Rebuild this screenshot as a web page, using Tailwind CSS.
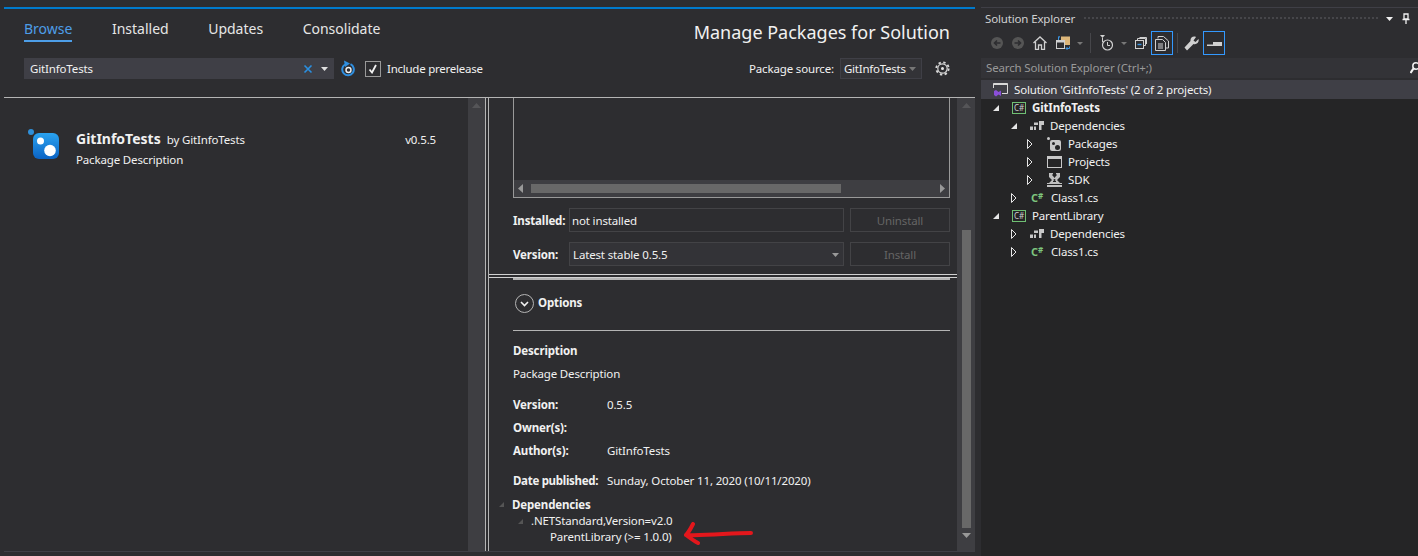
<!DOCTYPE html>
<html lang="en">
<head>
  <meta charset="UTF-8" />
  <title>Manage Packages for Solution</title>
  <script src="https://cdn.jsdelivr.net/npm/@tailwindcss/browser@4"></script>
</head>
<body class="bg-[#2d2d30] font-['Noto_Sans',sans-serif] text-[11.5px] tracking-[-0.15px] text-[#f1f1f1]">
  <div class="flex w-[1418px] h-[556px] overflow-hidden">

    <!-- NuGet pane -->
    <div class="w-[975px] h-full pl-[4px] flex flex-col">
      <div class="h-[7px] shrink-0"></div>
      <div class="h-[2px] shrink-0 bg-[#007acc]"></div>

      <!-- Header -->
      <div class="h-[88px] shrink-0 pl-[20px] pr-[25px] flex flex-col">
        <div class="flex justify-between h-[40px] items-start pt-[10px] tracking-normal">
          <div class="flex gap-[39.5px] text-[14px] text-[#e6e6e6]">
            <div class="text-[#4d9ee8] border-b-2 border-[#4d9ee8] h-[23px] leading-[20px]">Browse</div>
            <div class="leading-[20px]">Installed</div>
            <div class="leading-[20px]">Updates</div>
            <div class="leading-[20px]">Consolidate</div>
          </div>
          <div class="text-[18px] leading-[24px] mt-[1px] text-[#f1f1f1]">Manage Packages for Solution</div>
        </div>
        <div class="flex items-center justify-between mt-[9px]">
          <div class="flex items-center">
            <div class="w-[310px] h-[21px] bg-[#3f3f46] flex items-center pl-[6px] pr-[6px]">
              <span class="flex-1">GitInfoTests</span>
              <svg width="10" height="10" viewBox="0 0 10 10" class="mr-[8px]"><path d="M1.5 1.5L8.5 8.5M8.5 1.500L1.5 8.5" stroke="#2a8fe0" stroke-width="1.6"/></svg>
              <svg width="7" height="4" viewBox="0 0 7 4"><path d="M0 0H7L3.5 4Z" fill="#e0e0e0"/></svg>
            </div>
            <svg width="15" height="17" viewBox="0 0 15 17" class="ml-[7px]"><path d="M9.5 4.2A5.8 5.800 0 1 1 4 4.500" fill="none" stroke="#2f8fe0" stroke-width="2"/><path d="M3 0.500L9 3.500L4 7Z" fill="#2f8fe0"/><circle cx="7.500" cy="10" r="2.500" fill="none" stroke="#f1f1f1" stroke-width="1.400"/></svg>
            <div class="ml-[9px] w-[16px] h-[16px] border border-[#999] flex items-center justify-center">
              <svg width="10" height="10" viewBox="0 0 10 10"><path d="M1.5 5.5L4 8.5L8 1" fill="none" stroke="#f1f1f1" stroke-width="1.800"/></svg>
            </div>
            <span class="ml-[6px] pt-[1px] tracking-[-0.25px]">Include prerelease</span>
          </div>
          <div class="flex items-center">
            <span>Package source:</span>
            <div class="ml-[6px] w-[82px] h-[21px] bg-[#333337] border border-[#3f3f46] flex items-center pl-[3px] pr-[5px] justify-between">
              <span class="tracking-[-0.25px]">GitInfoTests</span>
              <svg width="7" height="4" viewBox="0 0 7 4"><path d="M0 0H7L3.5 4Z" fill="#777"/></svg>
            </div>
            <svg width="15" height="15" viewBox="0 0 15 15" class="ml-[13px]"><circle cx="7.500" cy="7.500" r="1.500" fill="#e6e6e6"/><circle cx="7.500" cy="7.500" r="4.700" fill="none" stroke="#d8d8d8" stroke-width="1.200"/><circle cx="7.500" cy="7.500" r="6.200" fill="none" stroke="#d8d8d8" stroke-width="1.800" stroke-dasharray="2.400 2.470"/></svg>
          </div>
        </div>
      </div>
      <div class="h-px shrink-0 bg-[#b4b4b4]"></div>

      <!-- Content -->
      <div class="flex flex-1 min-h-0">
        <!-- Package list -->
        <div class="w-[464px] shrink-0 pl-[24px] pt-[30px] flex items-start">
          <svg width="32" height="32" viewBox="0 0 32 32" class="shrink-0 mt-[1px]">
            <defs><linearGradient id="pkg" x1="0" y1="0" x2="0" y2="1"><stop offset="0" stop-color="#2aa3f0"/><stop offset="1" stop-color="#0b63c4"/></linearGradient></defs>
            <circle cx="3" cy="3" r="3" fill="#2f8fd8"/>
            <rect x="5" y="4" width="26" height="26" rx="6" fill="url(#pkg)"/>
            <circle cx="12.500" cy="12" r="3.500" fill="#fff"/>
            <circle cx="22" cy="21.500" r="5.800" fill="#fff"/>
          </svg>
          <div class="ml-[16px] flex-1">
            <div class="flex items-baseline h-[20px]">
              <span class="text-[14px] font-bold tracking-normal">GitInfoTests</span>
              <span class="ml-[6px]">by GitInfoTests</span>
              <span class="ml-auto mr-[32px]">v0.5.5</span>
            </div>
            <div class="mt-[3px]">Package Description</div>
          </div>
        </div>

        <!-- List scrollbar -->
        <div class="w-[17px] shrink-0 bg-[#3e3e42] flex justify-center pt-[5px] pb-[5px]">
          <svg width="9" height="5" viewBox="0 0 9 5"><path d="M0 5H9L4.5 0Z" fill="#555558"/></svg>
        </div>
        <div class="w-px shrink-0 bg-[#b4b4b4]"></div>
        <div class="w-[2px] shrink-0"></div>
        <div class="w-px shrink-0 bg-[#b4b4b4]"></div>

        <!-- Details -->
        <div class="w-[468px] shrink-0 flex flex-col pb-[5px]">
          <div class="pl-[24px] pr-[7px]">
            <div class="h-[100px] border-x border-b border-[#999] flex flex-col justify-end">
              <div class="h-[17px] bg-[#3e3e42] flex items-center px-[4px]">
                <svg width="5" height="9" viewBox="0 0 5 9" class="mr-[8px]"><path d="M5 0V9L0 4.5Z" fill="#999"/></svg>
                <div class="w-[310px] h-[9px] bg-[#686868]"></div>
                <svg width="5" height="9" viewBox="0 0 5 9" class="ml-auto"><path d="M0 0V9L5 4.5Z" fill="#999"/></svg>
              </div>
            </div>
            <div class="flex items-center mt-[10px] h-[24px]">
              <span class="w-[56px] pt-[1px] font-bold">Installed:</span>
              <div class="w-[275px] h-[24px] pt-[1px] border border-[#434346] flex items-center px-[2px]">not installed</div>
              <div class="ml-[6px] flex-1 h-[24px] pt-[1px] border border-[#434346] flex items-center justify-center text-[#656565]">Uninstall</div>
            </div>
            <div class="flex items-center mt-[10px] h-[24px]">
              <span class="w-[56px] pt-[1px] font-bold">Version:</span>
              <div class="w-[275px] h-[24px] pt-[1px] bg-[#333337] border border-[#434346] flex items-center justify-between pl-[3px] pr-[4px]">
                <span>Latest stable 0.5.5</span>
                <svg width="7" height="4" viewBox="0 0 7 4"><path d="M0 0H7L3.5 4Z" fill="#999"/></svg>
              </div>
              <div class="ml-[6px] flex-1 h-[24px] pt-[1px] border border-[#434346] flex items-center justify-center text-[#656565]">Install</div>
            </div>
          </div>
          <div class="h-px bg-[#d0d0d0] mt-[8px]"></div>
          <div class="h-px bg-[#d0d0d0] mt-[2px]"></div>
          <div class="ml-[24px] mr-[7px] h-[2px] bg-[#b4b4b4]"></div>
          <div class="pl-[24px] pr-[7px]">
            <div class="flex items-center h-[20px] mt-[13px] pl-[2px]">
              <svg width="19" height="19" viewBox="0 0 19 19"><circle cx="9.5" cy="9.5" r="9" fill="none" stroke="#b4b4b4"/><path d="M6 8L9.5 11.5L13 8" fill="none" stroke="#f1f1f1" stroke-width="1.6"/></svg>
              <span class="ml-[4px] font-bold">Options</span>
            </div>
            <div class="h-px bg-[#b4b4b4] mt-[17px]"></div>
            <div class="font-bold mt-[11px] h-[17px] leading-[17px]">Description</div>
            <div class="mt-[6px] h-[17px] leading-[17px]">Package Description</div>
            <div class="flex mt-[14px] h-[17px] leading-[17px]"><span class="w-[94px] font-bold">Version:</span><span>0.5.5</span></div>
            <div class="flex mt-[6px] h-[17px] leading-[17px]"><span class="w-[94px] font-bold">Owner(s):</span></div>
            <div class="flex mt-[6px] h-[17px] leading-[17px]"><span class="w-[94px] font-bold">Author(s):</span><span>GitInfoTests</span></div>
            <div class="flex mt-[13px] h-[17px] leading-[17px]"><span class="w-[94px] font-bold tracking-[-0.3px]">Date published:</span><span>Sunday, October 11, 2020 (10/11/2020)</span></div>
          </div>
          <div class="pl-[10px] mt-[7px] h-[17px] leading-[17px] flex items-center">
            <svg width="5" height="5" viewBox="0 0 5 5"><path d="M5 0V5H0Z" fill="#555"/></svg>
            <span class="ml-[8px] font-bold">Dependencies</span>
          </div>
          <div class="pl-[29px] h-[16px] leading-[16px] flex items-center">
            <svg width="5" height="5" viewBox="0 0 5 5"><path d="M5 0V5H0Z" fill="#555"/></svg>
            <span class="ml-[8px]">.NETStandard,Version=v2.0</span>
          </div>
          <div class="pl-[61px] h-[16px] leading-[16px] relative">
            ParentLibrary (&gt;= 1.0.0)
            <!-- red annotation arrow -->
            <svg width="72" height="26" viewBox="0 0 72 26" class="absolute left-[193px] -top-[7px]"><path d="M69 11C48 11 24 14 4 13M11 2C9 6 7 10 4 13C8 16 12 19 16 21" fill="none" stroke="#e3171c" stroke-width="4" stroke-linecap="round" stroke-linejoin="round"/></svg>
          </div>
        </div>

        <!-- Details scrollbar -->
        <div class="w-[18px] shrink-0 bg-[#3e3e42] pb-[5px] flex flex-col items-center relative">
          <svg width="9" height="5" viewBox="0 0 9 5" class="mt-[5px]"><path d="M0 5H9L4.5 0Z" fill="#555558"/></svg>
          <div class="w-[9px] h-[298px] bg-[#686868] mt-[122px]"></div>
          <svg width="9" height="5" viewBox="0 0 9 5" class="mt-[5px]"><path d="M0 0H9L4.5 5Z" fill="#999"/></svg>
        </div>
      </div>
      <div class="h-[5px] shrink-0 border-t border-[#3f3f46]"></div>
    </div>

    <!-- Splitter -->
    <div class="w-[6px] shrink-0"></div>

    <!-- Solution Explorer -->
    <div class="flex-1 pt-[7px] flex flex-col">
      <div class="h-px bg-[#3f3f46]"></div>
      <div class="h-[21px] flex items-center pl-[4px] pr-[8px] text-[#d0d0d0]">
        <span>Solution Explorer</span>
        <div class="flex-1 mx-[8px] h-[5px] bg-[radial-gradient(#46464a_1px,transparent_1px)] bg-[length:4px_4px]"></div>
        <svg width="7" height="4" viewBox="0 0 7 4" class="mr-[9px]"><path d="M0 0H7L3.5 4Z" fill="#f1f1f1"/></svg>
        <svg width="8" height="11" viewBox="0 0 8 11"><path d="M2 1H6V6H2ZM0.5 6.5H7.5M4 7V11" fill="none" stroke="#f1f1f1" stroke-width="1.3"/></svg>
      </div>
      <!-- Toolbar -->
      <div class="h-[28px] flex items-center pl-[10px]">
        <svg width="12" height="12" viewBox="0 0 12 12"><circle cx="6" cy="6" r="6" fill="#555"/><path d="M9.500 6H3.500M6 3.500L3.500 6L6 8.500" fill="none" stroke="#2d2d30" stroke-width="1.600"/></svg>
        <svg width="12" height="12" viewBox="0 0 12 12" class="ml-[9px]"><circle cx="6" cy="6" r="6" fill="#555"/><path d="M2.500 6H8.500M6 3.500L8.500 6L6 8.500" fill="none" stroke="#2d2d30" stroke-width="1.600"/></svg>
        <svg width="14" height="14" viewBox="0 0 14 14" class="ml-[9px]"><path d="M0.500 7L7 1L13.500 7M2.500 6V13.500H5.500V9H8.500V13.500H11.500V6" fill="none" stroke="#d0d0d0" stroke-width="1.300"/></svg>
        <svg width="14" height="14" viewBox="0 0 14 14" class="ml-[9px]"><rect x="0.500" y="4.500" width="8" height="8" fill="#2d2d30" stroke="#d0d0d0"/><path d="M0.500 4.500H8.500V6.500H0.500Z" fill="#d0d0d0"/><path d="M5 0.500H14V9H9V4H5Z" fill="#dcb67a"/><path d="M2.500 4V1H4M3.500 0L2.500 1M10 12.500H13.500V10.500M10 12.500L11.500 11M10 12.500L11.500 14" fill="none" stroke="#3b94e0"/></svg>
        <svg width="6" height="3" viewBox="0 0 6 3" class="ml-[7px]"><path d="M0 0H6L3 3Z" fill="#777"/></svg>
        <div class="w-px h-[20px] bg-[#46464a] ml-[7px]"></div>
        <svg width="13" height="16" viewBox="0 0 13 16" class="ml-[9px]"><circle cx="7.500" cy="10" r="5" fill="none" stroke="#d0d0d0" stroke-width="1.200"/><path d="M7.500 7V10.500H10" fill="none" stroke="#d0d0d0"/><path d="M0 0H5L2.500 3Z" fill="#d0d0d0"/><path d="M2.500 3V7" stroke="#d0d0d0"/></svg>
        <svg width="6" height="3" viewBox="0 0 6 3" class="ml-[8px]"><path d="M0 0H6L3 3Z" fill="#777"/></svg>
        <svg width="12" height="12" viewBox="0 0 12 12" class="ml-[8px]"><rect x="0.500" y="3.500" width="8" height="8" fill="none" stroke="#d0d0d0"/><path d="M2.500 3V1.500H10.500V8.500H9M4.500 0.500H11.500V7" fill="none" stroke="#d0d0d0"/><path d="M2.500 7.500H6.500" stroke="#3b94e0" stroke-width="1.400"/></svg>
        <div class="ml-[4px] w-[22px] h-[24px] border border-[#3399ff] flex items-center justify-center">
          <svg width="14" height="15" viewBox="0 0 14 15"><path d="M3 2.500V0.500H8.500L13.500 5V12H11M0.500 3.500H7.500L10.500 6.500V14.500H0.500Z" fill="none" stroke="#d0d0d0"/><path d="M3 8H8M3 10H8M3 12H8" stroke="#d0d0d0"/></svg>
        </div>
        <div class="w-px h-[20px] bg-[#46464a] ml-[4px]"></div>
        <svg width="15" height="15" viewBox="0 0 15 15" class="ml-[6px]"><path d="M14.500 3L11.500 6L9.500 4.500L12 1C9 -0.500 6 2 6.500 5L0.500 11.500L3 14.500L9.500 8C12.500 9 15.500 6.500 14.500 3Z" fill="#d0d0d0"/></svg>
        <div class="ml-[4px] w-[22px] h-[24px] border border-[#3399ff] flex items-center justify-center">
          <svg width="15" height="5" viewBox="0 0 15 5"><path d="M0 3.500H6V1H15V5H0Z" fill="#d0d0d0"/></svg>
        </div>
      </div>
      <!-- Search -->
      <div class="h-[20px] mt-[1px] bg-[#333337] flex items-center pl-[5px] text-[#999]">
        <span class="flex-1">Search Solution Explorer (Ctrl+;)</span>
        <svg width="8" height="12" viewBox="0 0 8 12"><circle cx="6" cy="4" r="3.200" fill="none" stroke="#f1f1f1" stroke-width="1.500"/><path d="M3.500 6.500L0.500 11" stroke="#f1f1f1" stroke-width="2.200"/></svg>
      </div>
      <!-- Tree -->
      <div class="flex-1 mt-[2px] bg-[#252526] text-[#f1f1f1]">
        <div class="h-[19px] bg-[#3f3f46] flex items-center pl-[12px]">
          <svg width="15" height="15" viewBox="0 0 15 15"><path d="M0.500 6V1.500H14.500V11.500H9" fill="none" stroke="#d8d8d8"/><path d="M0.500 1.500H14.500V3H0.500Z" fill="#d8d8d8"/><path d="M1 9L3 8L5.500 10L8 8.500V14L5.500 12.500L3 14.500L1 13Z" fill="#8a4fd8"/></svg>
          <span class="ml-[6px]">Solution 'GitInfoTests' (2 of 2 projects)</span>
        </div>
        <div class="h-[18px] flex items-center pl-[12px]">
          <svg width="6" height="6" viewBox="0 0 6 6"><path d="M6 0V6H0Z" fill="#e6e6e6"/></svg>
          <div class="ml-[13px] w-[14px] h-[12px] border border-[#6fbf73] text-[8px] leading-[10px] text-center text-[#d0d0d0] tracking-normal">C#</div>
          <span class="ml-[6px] font-bold">GitInfoTests</span>
        </div>
        <div class="h-[18px] flex items-center pl-[30px]">
          <svg width="6" height="6" viewBox="0 0 6 6"><path d="M6 0V6H0Z" fill="#e6e6e6"/></svg>
          <svg width="14" height="10" viewBox="0 0 14 10" class="ml-[13px]"><path d="M0 5.500H3V9H0ZM4 5.500H6V9H4ZM4 1.500H8V4H4ZM9 0H14V4H11.500V9H9Z" fill="#c8c8c8"/></svg>
          <span class="ml-[6px]">Dependencies</span>
        </div>
        <div class="h-[18px] flex items-center pl-[46px]">
          <svg width="6" height="10" viewBox="0 0 6 10"><path d="M0.5 0.5L5 5L0.5 9.5Z" fill="none" stroke="#e6e6e6"/></svg>
          <svg width="15" height="14" viewBox="0 0 15 14" class="ml-[14px]"><circle cx="1.500" cy="1.500" r="1.500" fill="#c8c8c8"/><rect x="3" y="3" width="11" height="11" rx="2" fill="#c8c8c8"/><circle cx="6.500" cy="6.500" r="1.500" fill="#252526"/><circle cx="10.500" cy="10.500" r="2.500" fill="#252526"/></svg>
          <span class="ml-[6px]">Packages</span>
        </div>
        <div class="h-[18px] flex items-center pl-[46px]">
          <svg width="6" height="10" viewBox="0 0 6 10"><path d="M0.5 0.5L5 5L0.5 9.5Z" fill="none" stroke="#e6e6e6"/></svg>
          <svg width="15" height="12" viewBox="0 0 15 12" class="ml-[14px]"><rect x="0.5" y="0.5" width="14" height="11" fill="none" stroke="#c8c8c8"/><rect x="0" y="0" width="15" height="3" fill="#c8c8c8"/></svg>
          <span class="ml-[6px]">Projects</span>
        </div>
        <div class="h-[18px] flex items-center pl-[46px]">
          <svg width="6" height="10" viewBox="0 0 6 10"><path d="M0.5 0.5L5 5L0.5 9.5Z" fill="none" stroke="#e6e6e6"/></svg>
          <svg width="15" height="14" viewBox="0 0 15 14" class="ml-[14px]"><path d="M2 0H6V3L7.500 5L9 3V0H13V4L10 7L13 10H15V14H0V10H2L5 7L2 4Z" fill="#c0c0c0"/><path d="M0 11.500H15M5 2H10M6 8.500H9" stroke="#252526"/><circle cx="7.500" cy="7" r="1" fill="#252526"/></svg>
          <span class="ml-[6px]">SDK</span>
        </div>
        <div class="h-[18px] flex items-center pl-[30px]">
          <svg width="6" height="10" viewBox="0 0 6 10"><path d="M0.5 0.5L5 5L0.5 9.5Z" fill="none" stroke="#e6e6e6"/></svg>
          <span class="ml-[14px] w-[14px] font-bold text-[#7fc77f] leading-none tracking-normal"><span class="text-[11px]">C</span><span class="text-[8px] align-top">#</span></span>
          <span class="ml-[6px]">Class1.cs</span>
        </div>
        <div class="h-[18px] flex items-center pl-[12px]">
          <svg width="6" height="6" viewBox="0 0 6 6"><path d="M6 0V6H0Z" fill="#e6e6e6"/></svg>
          <div class="ml-[13px] w-[14px] h-[12px] border border-[#6fbf73] text-[8px] leading-[10px] text-center text-[#d0d0d0] tracking-normal">C#</div>
          <span class="ml-[6px]">ParentLibrary</span>
        </div>
        <div class="h-[18px] flex items-center pl-[30px]">
          <svg width="6" height="10" viewBox="0 0 6 10"><path d="M0.5 0.5L5 5L0.5 9.5Z" fill="none" stroke="#e6e6e6"/></svg>
          <svg width="14" height="10" viewBox="0 0 14 10" class="ml-[13px]"><path d="M0 5.500H3V9H0ZM4 5.500H6V9H4ZM4 1.500H8V4H4ZM9 0H14V4H11.500V9H9Z" fill="#c8c8c8"/></svg>
          <span class="ml-[6px]">Dependencies</span>
        </div>
        <div class="h-[18px] flex items-center pl-[30px]">
          <svg width="6" height="10" viewBox="0 0 6 10"><path d="M0.5 0.5L5 5L0.5 9.5Z" fill="none" stroke="#e6e6e6"/></svg>
          <span class="ml-[14px] w-[14px] font-bold text-[#7fc77f] leading-none tracking-normal"><span class="text-[11px]">C</span><span class="text-[8px] align-top">#</span></span>
          <span class="ml-[6px]">Class1.cs</span>
        </div>
      </div>
    </div>
  </div>
</body>
</html>
